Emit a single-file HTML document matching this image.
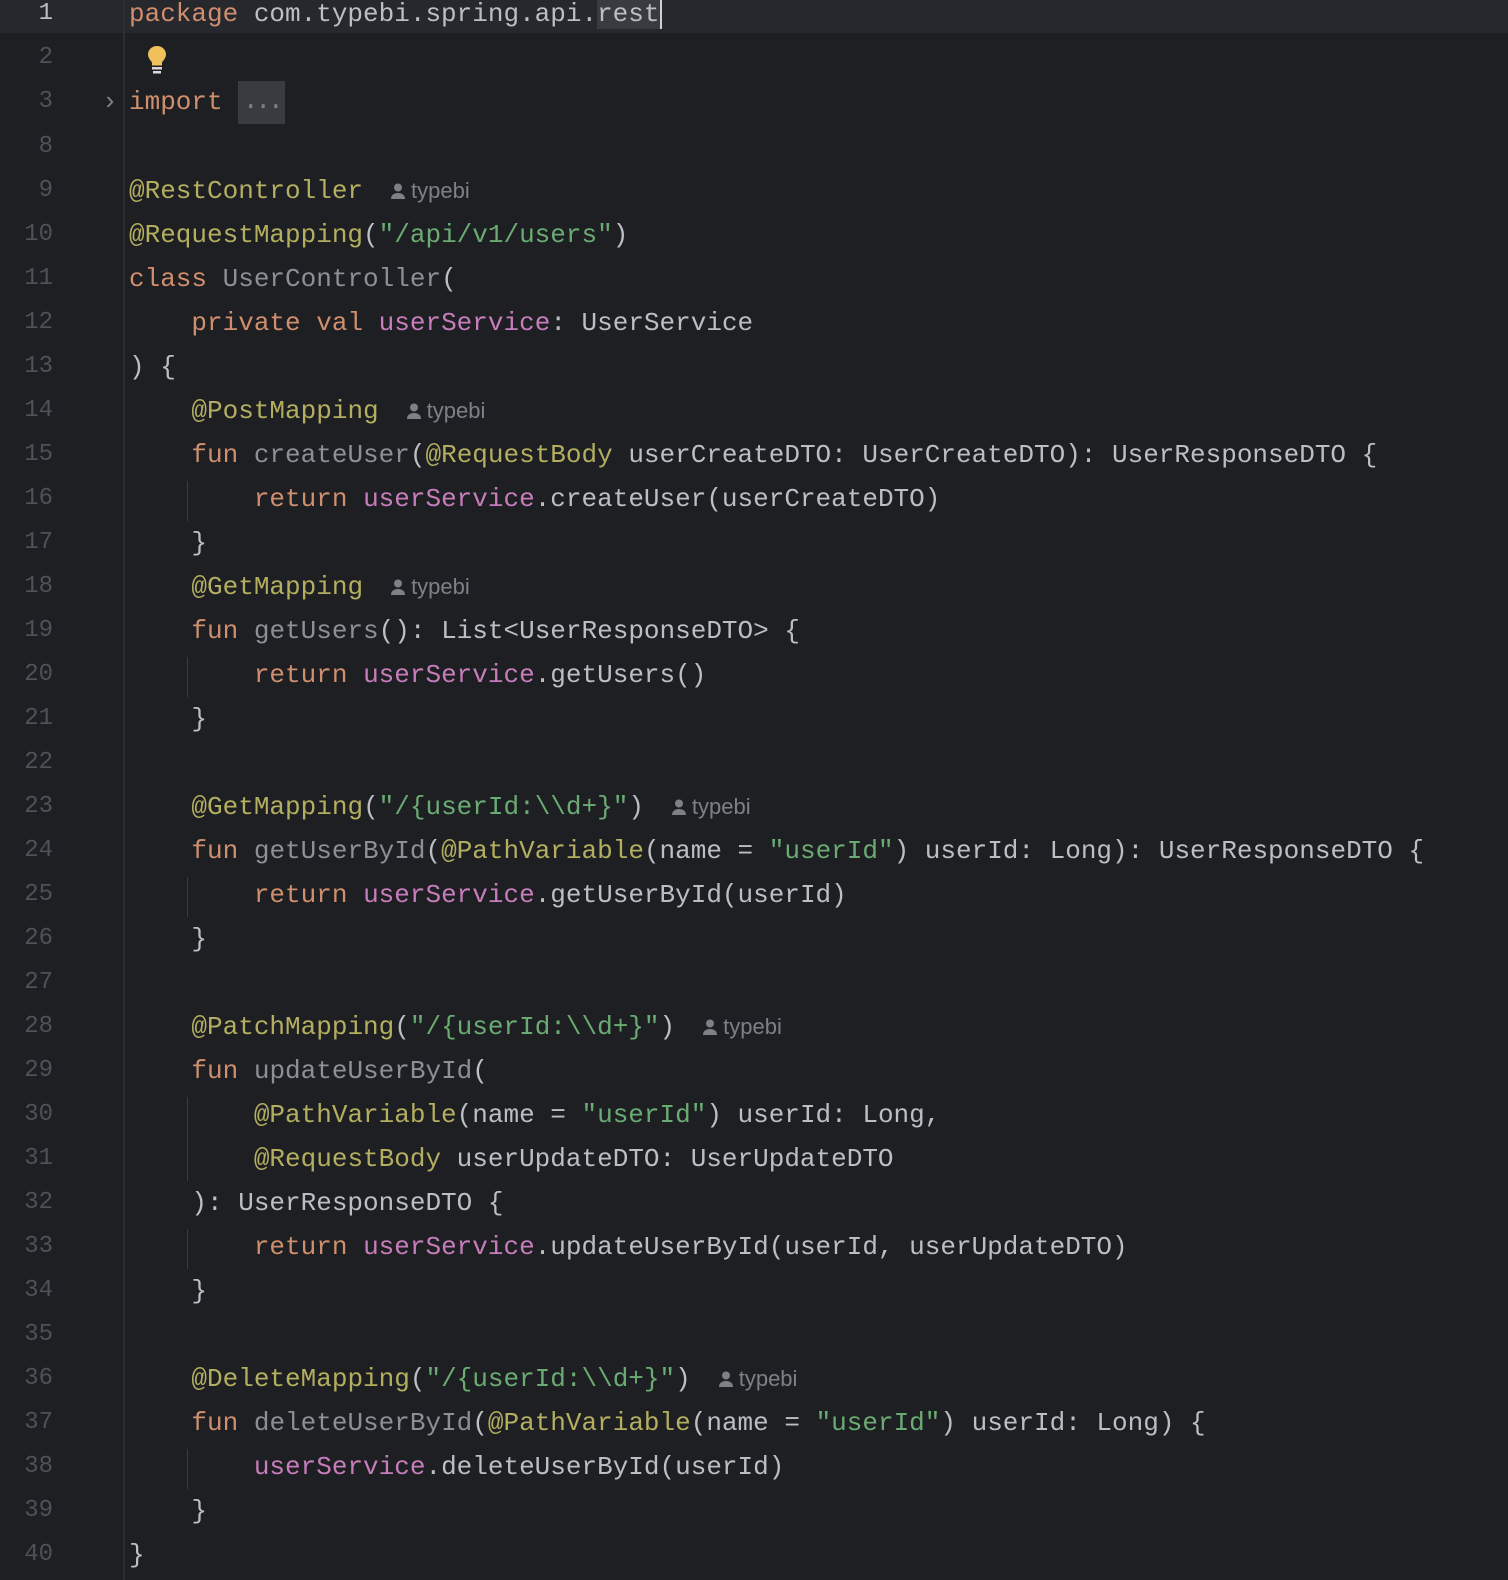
<!DOCTYPE html>
<html><head><meta charset="utf-8"><style>
html,body{margin:0;padding:0;background:#1e1f22;width:1508px;height:1580px;overflow:hidden;position:relative}
.r{position:absolute;left:0;width:1508px;height:44px;line-height:44px;font-family:"Liberation Mono",monospace;font-size:26px;color:#bcbec4;white-space:pre}
.n{position:absolute;left:0;width:53px;text-align:right;color:#4e5157;font-size:24px}
.c{position:absolute;left:129px}
.k{color:#cf8e6d}.a{color:#b3ae60}.s{color:#6aab73}.p{color:#c77dbb}.g{color:#8c8f96}
.h{font-family:"Liberation Sans",sans-serif;font-size:22px;color:#7d8087;margin-left:28px;position:relative}
.h svg{position:relative;top:1px;margin-right:6px}
.gd{position:absolute;left:187px;top:4px;width:1px;height:40px;background:#393b40}
.sep{position:absolute;left:123px;top:0;width:2px;height:1580px;background:#2b2d30}
</style></head><body>
<div style="position:absolute;left:0;top:0;width:1508px;height:33px;background:#26282e"></div>
<div class="sep"></div>
<div class="r" style="top:-8px"><span class="n" style="color:#bcbec4">1</span><span class="c"><span class="k">package</span> com.typebi.spring.api.<span style="background:#393b40">rest</span><span style="display:inline-block;width:2px;height:30px;background:#ced0d6;vertical-align:middle"></span></span></div>
<div class="r" style="top:36px"><span class="n">2</span></div>
<svg style="position:absolute;left:146px;top:45px" width="22" height="31" viewBox="0 0 22 31"><path d="M11 1C5.5 1 2 5 2 9.5c0 3.5 2.5 5.5 4 8v3h10v-3c1.5-2.5 4-4.5 4-8C20 5 16.5 1 11 1z" fill="#f0c15b"/><rect x="6" y="22" width="10" height="2.5" fill="#d8d8d8"/><rect x="7" y="26" width="8" height="2.5" fill="#d8d8d8"/></svg>
<div class="r" style="top:80px"><span class="n">3</span><span style="position:absolute;left:102px;color:#7d8087">›</span><span class="c"><span class="k">import</span> <span style="background:#393b40;color:#7d8087;display:inline-block;width:47px;height:43px;line-height:40px;vertical-align:middle;letter-spacing:-3px;text-align:center">...</span></span></div>
<div class="r" style="top:125px"><span class="n">8</span></div>
<div class="r" style="top:169px"><span class="n">9</span><span class="c"><span class="a">@RestController</span><span class="h"><svg width="14" height="16" viewBox="0 0 14 16"><circle cx="7" cy="4.5" r="4" fill="#7d8087"/><path d="M0 16c0-4 3-6 7-6s7 2 7 6z" fill="#7d8087"/></svg>typebi</span></span></div>
<div class="r" style="top:213px"><span class="n">10</span><span class="c"><span class="a">@RequestMapping</span>(<span class="s">"/api/v1/users"</span>)</span></div>
<div class="r" style="top:257px"><span class="n">11</span><span class="c"><span class="k">class</span> <span class="g">UserController</span>(</span></div>
<div class="r" style="top:301px"><span class="n">12</span><span class="c">    <span class="k">private val</span> <span class="p">userService</span>: UserService</span></div>
<div class="r" style="top:345px"><span class="n">13</span><span class="c">) {</span></div>
<div class="r" style="top:389px"><span class="n">14</span><span class="c">    <span class="a">@PostMapping</span><span class="h"><svg width="14" height="16" viewBox="0 0 14 16"><circle cx="7" cy="4.5" r="4" fill="#7d8087"/><path d="M0 16c0-4 3-6 7-6s7 2 7 6z" fill="#7d8087"/></svg>typebi</span></span></div>
<div class="r" style="top:433px"><span class="n">15</span><span class="c">    <span class="k">fun</span> <span class="g">createUser</span>(<span class="a">@RequestBody</span> userCreateDTO: UserCreateDTO): UserResponseDTO {</span></div>
<div class="r" style="top:477px"><span class="n">16</span><span class="gd"></span><span class="c">        <span class="k">return</span> <span class="p">userService</span>.createUser(userCreateDTO)</span></div>
<div class="r" style="top:521px"><span class="n">17</span><span class="c">    }</span></div>
<div class="r" style="top:565px"><span class="n">18</span><span class="c">    <span class="a">@GetMapping</span><span class="h"><svg width="14" height="16" viewBox="0 0 14 16"><circle cx="7" cy="4.5" r="4" fill="#7d8087"/><path d="M0 16c0-4 3-6 7-6s7 2 7 6z" fill="#7d8087"/></svg>typebi</span></span></div>
<div class="r" style="top:609px"><span class="n">19</span><span class="c">    <span class="k">fun</span> <span class="g">getUsers</span>(): List&lt;UserResponseDTO&gt; {</span></div>
<div class="r" style="top:653px"><span class="n">20</span><span class="gd"></span><span class="c">        <span class="k">return</span> <span class="p">userService</span>.getUsers()</span></div>
<div class="r" style="top:697px"><span class="n">21</span><span class="c">    }</span></div>
<div class="r" style="top:741px"><span class="n">22</span></div>
<div class="r" style="top:785px"><span class="n">23</span><span class="c">    <span class="a">@GetMapping</span>(<span class="s">"/{userId:\\d+}"</span>)<span class="h"><svg width="14" height="16" viewBox="0 0 14 16"><circle cx="7" cy="4.5" r="4" fill="#7d8087"/><path d="M0 16c0-4 3-6 7-6s7 2 7 6z" fill="#7d8087"/></svg>typebi</span></span></div>
<div class="r" style="top:829px"><span class="n">24</span><span class="c">    <span class="k">fun</span> <span class="g">getUserById</span>(<span class="a">@PathVariable</span>(name = <span class="s">"userId"</span>) userId: Long): UserResponseDTO {</span></div>
<div class="r" style="top:873px"><span class="n">25</span><span class="gd"></span><span class="c">        <span class="k">return</span> <span class="p">userService</span>.getUserById(userId)</span></div>
<div class="r" style="top:917px"><span class="n">26</span><span class="c">    }</span></div>
<div class="r" style="top:961px"><span class="n">27</span></div>
<div class="r" style="top:1005px"><span class="n">28</span><span class="c">    <span class="a">@PatchMapping</span>(<span class="s">"/{userId:\\d+}"</span>)<span class="h"><svg width="14" height="16" viewBox="0 0 14 16"><circle cx="7" cy="4.5" r="4" fill="#7d8087"/><path d="M0 16c0-4 3-6 7-6s7 2 7 6z" fill="#7d8087"/></svg>typebi</span></span></div>
<div class="r" style="top:1049px"><span class="n">29</span><span class="c">    <span class="k">fun</span> <span class="g">updateUserById</span>(</span></div>
<div class="r" style="top:1093px"><span class="n">30</span><span class="gd"></span><span class="c">        <span class="a">@PathVariable</span>(name = <span class="s">"userId"</span>) userId: Long,</span></div>
<div class="r" style="top:1137px"><span class="n">31</span><span class="gd" style="top:0;height:44px"></span><span class="c">        <span class="a">@RequestBody</span> userUpdateDTO: UserUpdateDTO</span></div>
<div class="r" style="top:1181px"><span class="n">32</span><span class="c">    ): UserResponseDTO {</span></div>
<div class="r" style="top:1225px"><span class="n">33</span><span class="gd"></span><span class="c">        <span class="k">return</span> <span class="p">userService</span>.updateUserById(userId, userUpdateDTO)</span></div>
<div class="r" style="top:1269px"><span class="n">34</span><span class="c">    }</span></div>
<div class="r" style="top:1313px"><span class="n">35</span></div>
<div class="r" style="top:1357px"><span class="n">36</span><span class="c">    <span class="a">@DeleteMapping</span>(<span class="s">"/{userId:\\d+}"</span>)<span class="h"><svg width="14" height="16" viewBox="0 0 14 16"><circle cx="7" cy="4.5" r="4" fill="#7d8087"/><path d="M0 16c0-4 3-6 7-6s7 2 7 6z" fill="#7d8087"/></svg>typebi</span></span></div>
<div class="r" style="top:1401px"><span class="n">37</span><span class="c">    <span class="k">fun</span> <span class="g">deleteUserById</span>(<span class="a">@PathVariable</span>(name = <span class="s">"userId"</span>) userId: Long) {</span></div>
<div class="r" style="top:1445px"><span class="n">38</span><span class="gd"></span><span class="c">        <span class="p">userService</span>.deleteUserById(userId)</span></div>
<div class="r" style="top:1489px"><span class="n">39</span><span class="c">    }</span></div>
<div class="r" style="top:1533px"><span class="n">40</span><span class="c">}</span></div>
</body></html>
